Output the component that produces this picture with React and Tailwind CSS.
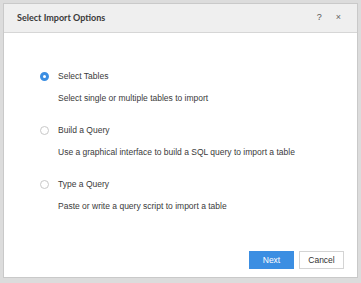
import React from "react";

function Radio({ checked }) {
  return checked ? (
    <span className="w-[9px] h-[9px] rounded-full border-[3px] border-[#3b8ee2] bg-white shrink-0" />
  ) : (
    <span className="w-[9px] h-[9px] rounded-full border border-[#c8c8c8] bg-white shrink-0" />
  );
}

function Option({ checked, title, desc }) {
  return (
    <div className="flex flex-col">
      <div className="flex items-center h-[14px]">
        <div className="w-[18px] flex items-center">
          <Radio checked={checked} />
        </div>
        <span className="text-[8.5px] text-[#3a3a3a]">{title}</span>
      </div>
      <div className="pl-[18px] mt-[8px] h-[14px] flex items-center text-[8.5px] text-[#3a3a3a]">{desc}</div>
    </div>
  );
}

export default function App() {
  return (
    <div className="w-[361px] h-[283px] bg-[#dcdcdc] p-[3px] pb-[5px]" style={{ fontFamily: '"Liberation Sans", Arial, sans-serif' }}>
      <div className="w-full h-full bg-white border border-[#c9c9c9] flex flex-col">
        <div className="h-[29px] bg-[#efefef] border-b border-[#d6d6d6] flex items-center pl-[13px] pr-[16px]">
          <span className="text-[9px] font-bold text-[#3a3a3a] flex-1" style={{ fontFamily: 'Lato, sans-serif' }}>Select Import Options</span>
          <span className="text-[9px] text-[#555] mr-[14px]">?</span>
          <span className="text-[9px] text-[#666]">×</span>
        </div>
        <div className="flex-1 flex flex-col pl-[36px] pt-[36px] gap-[18px]">
          <Option checked title="Select Tables" desc="Select single or multiple tables to import" />
          <Option title="Build a Query" desc="Use a graphical interface to build a SQL query to import a table" />
          <Option title="Type a Query" desc="Paste or write a query script to import a table" />
        </div>
        <div className="flex justify-end gap-[5px] pr-[13px] pb-[8px]">
          <button className="w-[45px] h-[18px] bg-[#3b8ee2] text-white text-[8.5px]">Next</button>
          <button className="w-[45px] h-[18px] bg-white border border-[#d4d4d4] text-[#333] text-[8.5px]">Cancel</button>
        </div>
      </div>
    </div>
  );
}
